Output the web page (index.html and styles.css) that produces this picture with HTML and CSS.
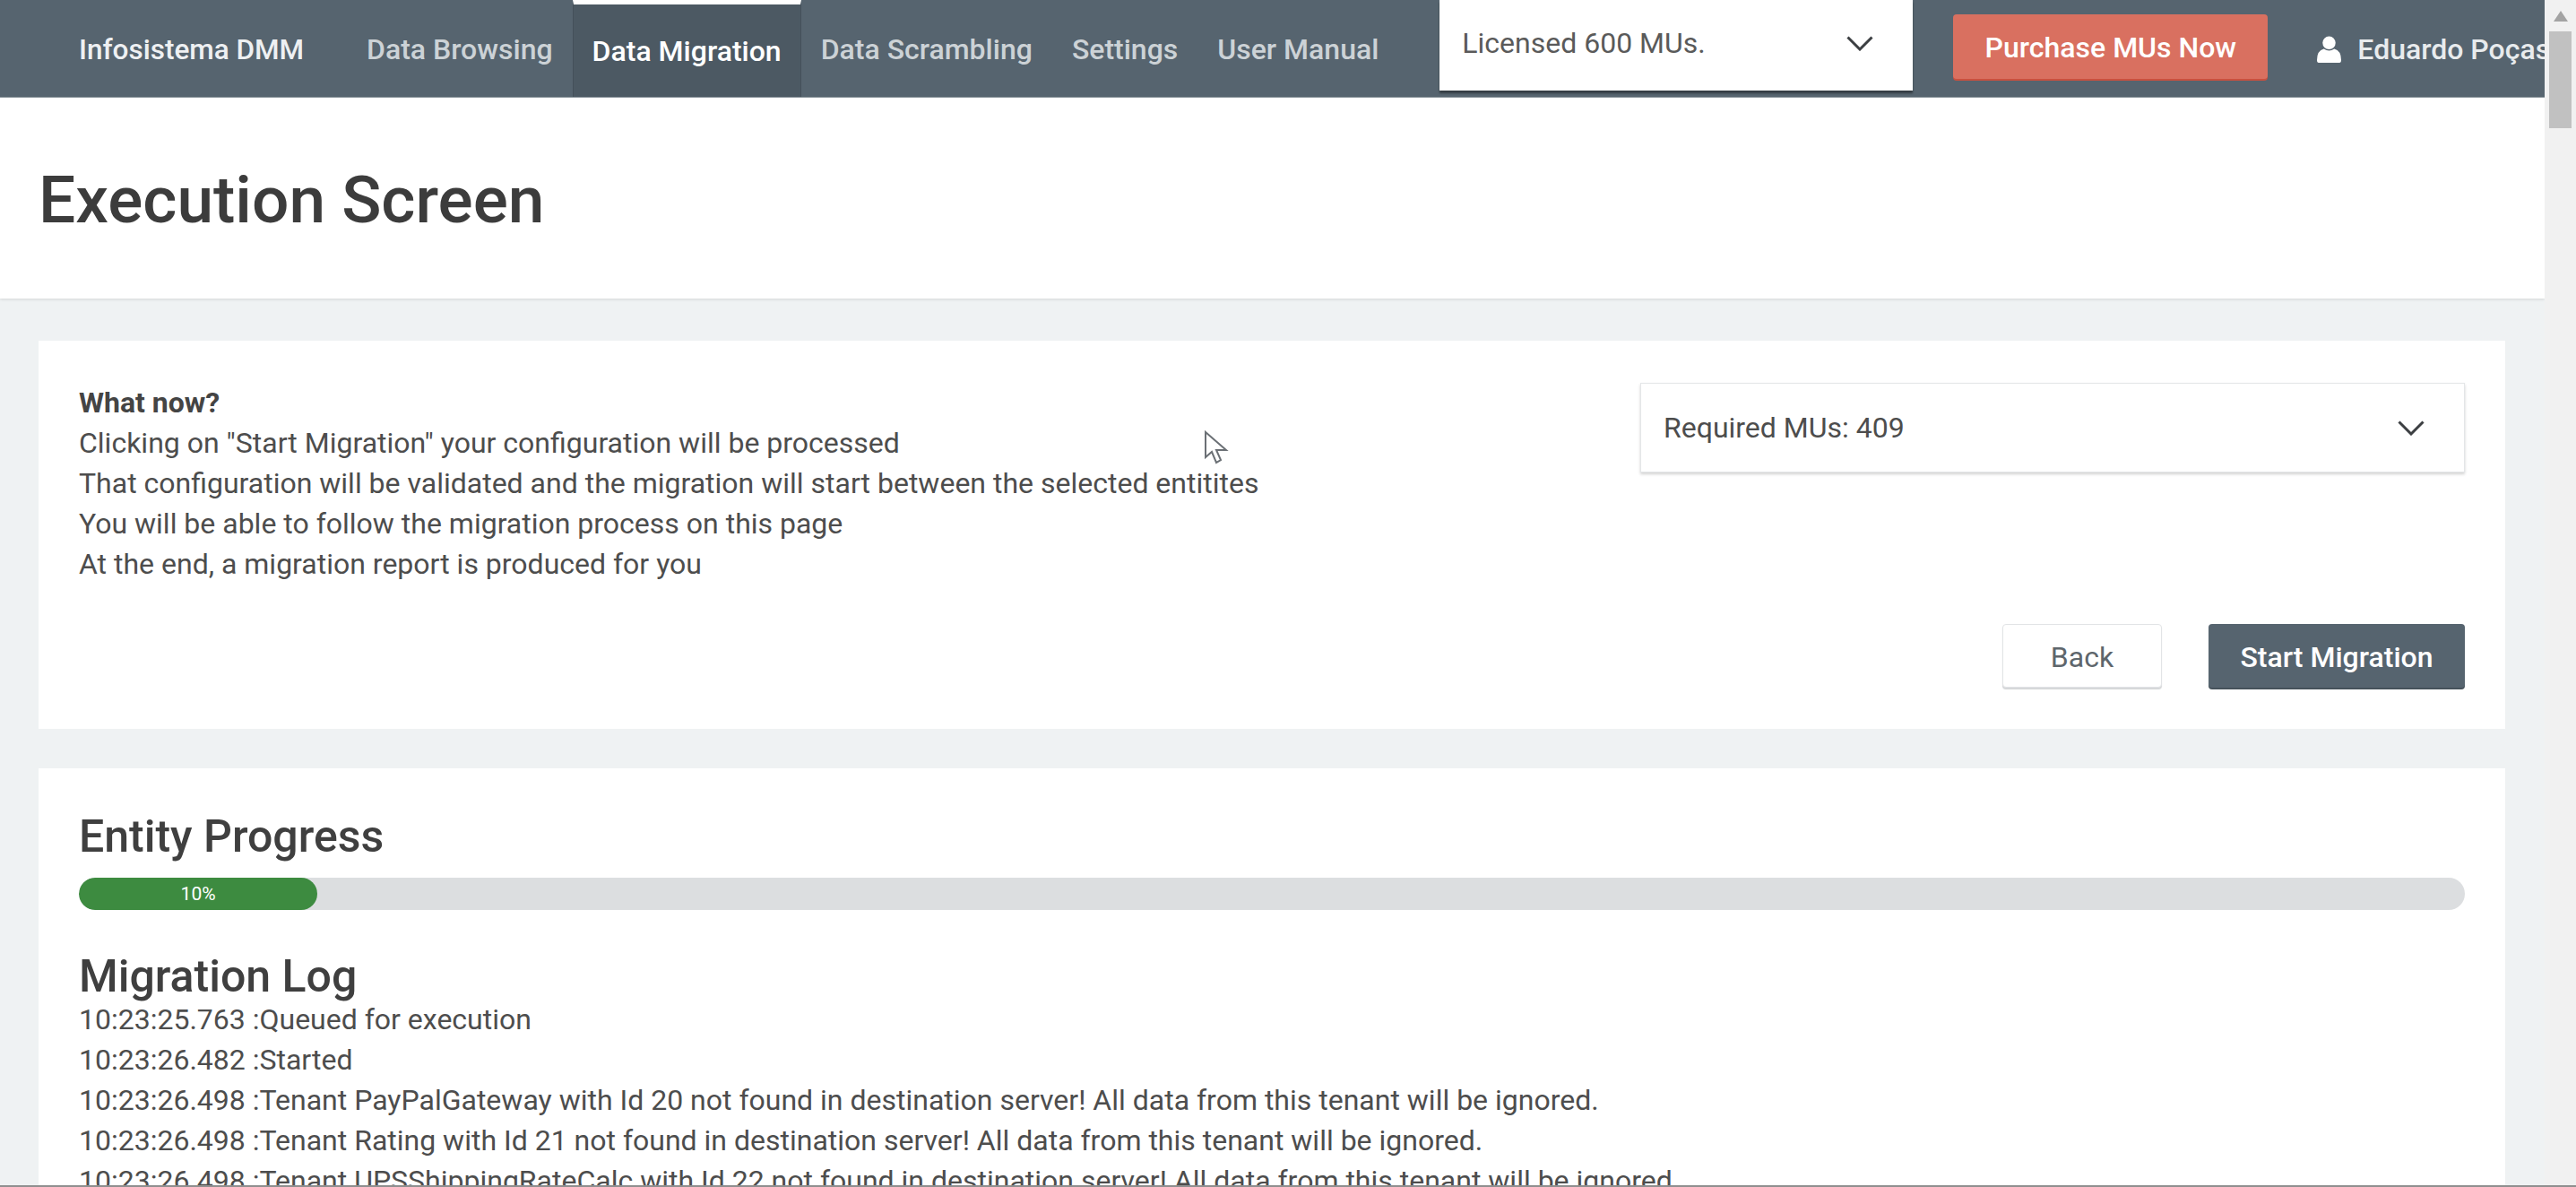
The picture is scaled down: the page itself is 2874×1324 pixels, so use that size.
FILE: index.html
```html
<!DOCTYPE html>
<html lang="en">
<head>
<meta charset="utf-8">
<title>Execution Screen</title>
<link rel="stylesheet" href="styles.css">
</head>
<body>
<div class="app">
  <div class="main">
    <header class="topbar">
      <div class="brand">Infosistema DMM</div>
      <nav class="nav">
        <a class="tab">Data Browsing</a>
        <a class="tab tab-active">Data Migration</a>
        <a class="tab">Data Scrambling</a>
        <a class="tab">Settings</a>
        <a class="tab">User Manual</a>
      </nav>
      <div class="license">
        <span>Licensed 600 MUs.</span>
        <svg class="chevron" viewBox="0 0 30 17"><path d="M1.5 1.5 L15 15 L28.5 1.5"/></svg>
      </div>
      <button class="purchase">Purchase MUs Now</button>
      <div class="user">
        <svg class="user-icon" viewBox="0 0 28 32"><circle cx="14" cy="8" r="7.5"/><path d="M2 31 Q0 31 0 28 Q0 17 8 15 Q14 19 20 15 Q28 17 28 28 Q28 31 26 31 Z"/></svg>
        <span>Eduardo Poças</span>
      </div>
    </header>
    <section class="title-panel">
      <h1 class="page-title">Execution Screen</h1>
    </section>
    <div class="content">
      <section class="card card-info">
        <div class="info-row">
          <div class="info-text">
            <strong class="info-head">What now?</strong>
            <div>Clicking on "Start Migration" your configuration will be processed</div>
            <div>That configuration will be validated and the migration will start between the selected entitites</div>
            <div>You will be able to follow the migration process on this page</div>
            <div>At the end, a migration report is produced for you</div>
          </div>
          <div class="required">
            <span>Required MUs: 409</span>
            <svg class="chevron" viewBox="0 0 30 17"><path d="M1.5 1.5 L15 15 L28.5 1.5"/></svg>
          </div>
        </div>
        <div class="actions">
          <button class="btn btn-back">Back</button>
          <button class="btn btn-start">Start Migration</button>
        </div>
      </section>
      <section class="card card-progress">
        <h2 class="section-title">Entity Progress</h2>
        <div class="track"><div class="fill" style="width:10%">10%</div></div>
        <h2 class="section-title log-title">Migration Log</h2>
        <div class="log">
          <div>10:23:25.763 :Queued for execution</div>
          <div>10:23:26.482 :Started</div>
          <div>10:23:26.498 :Tenant PayPalGateway with Id 20 not found in destination server! All data from this tenant will be ignored.</div>
          <div>10:23:26.498 :Tenant Rating with Id 21 not found in destination server! All data from this tenant will be ignored.</div>
          <div>10:23:26.498 :Tenant UPSShippingRateCalc with Id 22 not found in destination server! All data from this tenant will be ignored.</div>
        </div>
      </section>
    </div>
    <svg class="cursor" viewBox="0 0 28 40"><path d="M2 2 L2 30 L9 24 L14 36 L19 33 L14 22 L25 22 Z"/></svg>
  </div>
  <aside class="scrollbar">
    <svg class="scroll-arrow" viewBox="0 0 16 12"><path d="M8 0 L16 12 L0 12 Z"/></svg>
    <div class="scroll-thumb"></div>
  </aside>
  <div class="edge"></div>
</div>
</body>
</html>
```

FILE: styles.css
```css
* { box-sizing: border-box; }
html, body { margin: 0; height: 100%; overflow: hidden; }
body {
  font-family: Roboto, "Liberation Sans", sans-serif;
  font-size: 32px;
  line-height: 45px;
  color: #4d4d4d;
  background: #eff2f3;
}
.app { display: flex; height: 1324px; position: relative; overflow: hidden; }
.main { width: 2839px; flex: none; position: relative; display: flex; flex-direction: column; height: 1322px; overflow: hidden; }

.topbar {
  flex: none;
  height: 109px;
  background: #56646f;
  display: flex;
  align-items: center;
  white-space: nowrap;
  overflow: hidden;
  color: #fff;
  border-bottom: 1px solid #8d979f;
}
.brand { margin-left: 88px; padding-top: 2px; font-size: 31.5px; font-weight: 500; color: #eef0f2; width: 299px; flex: none; }
.nav { display: flex; height: 100%; flex: none; }
.tab { display: flex; align-items: center; padding: 2px 22px 0; color: #ccd2d6; font-weight: 500; }
.tab-active {
  background: #4c5963;
  color: #fff;
  border-top: 5px solid #fff;
  border-left: 1px solid #44505a;
  border-right: 1px solid #44505a;
  padding: 2px 21px 0;
}
.license {
  flex: none;
  margin-left: 46px;
  width: 528px;
  height: 101px;
  align-self: flex-start;
  background: #fff;
  box-shadow: 0 3px 2px rgba(0,0,0,.4);
  color: #5a5a5a;
  display: flex;
  align-items: center;
  justify-content: space-between;
  padding: 0 44px 4px 25px;
}
.chevron { width: 30px; height: 17px; fill: none; stroke: #3c3f42; stroke-width: 3; }
.purchase {
  flex: none;
  margin-left: 45px;
  width: 351px;
  height: 72px;
  margin-bottom: 5px;
  border: 0;
  border-radius: 4px;
  background: #d97060;
  box-shadow: 0 2px 0 #c9503f;
  color: #fff;
  font: 500 32px/45px Roboto, sans-serif;
  padding: 4px 0 0;
}
.user { flex: none; margin-left: 55px; padding-top: 2px; display: flex; align-items: center; gap: 18px; font-weight: 500; color: #e8ebed; }
.user-icon { width: 27px; height: 31px; fill: #fff; }

.title-panel {
  flex: none;
  height: 224px;
  background: #fff;
  padding: 4px 0 0 43px;
  display: flex;
  align-items: center;
  box-shadow: 0 1px 3px rgba(0,0,0,.12);
  position: relative;
}
.page-title { margin: 0; font-size: 73px; line-height: 80px; font-weight: 500; color: #3c3c3c; }

.content { flex: 1; min-height: 0; padding: 47px 44px 0 43px; display: flex; flex-direction: column; gap: 44px; }
.card { background: #fff; padding: 47px 45px 46px; flex: none; }
.card-info { height: 433px; }
.card-progress { padding-top: 46px; }

.info-row { display: flex; justify-content: space-between; align-items: flex-start; }
.info-head { display: block; font-weight: 700; color: #444; }
.required {
  width: 920px;
  height: 100px;
  border: 1px solid #e4e6e8;
  box-shadow: 0 2px 3px rgba(0,0,0,.18);
  display: flex;
  align-items: center;
  justify-content: space-between;
  padding: 0 44px 0 25px;
  background: #fff;
}
.actions { display: flex; justify-content: flex-end; gap: 52px; margin-top: 44px; }
.btn { height: 71px; border-radius: 4px; font: 400 32px/45px Roboto, sans-serif; padding: 4px 0 0; }
.btn-back { width: 178px; background: #fff; color: #5e666c; border: 1px solid #e2e4e6; box-shadow: 0 2px 1px #d4d6d8; }
.btn-start { width: 286px; background: #56646f; color: #fff; font-weight: 500; border: 0; box-shadow: 0 2px 0 #46525b; }

.section-title { margin: 0; font-size: 50px; line-height: 60px; font-weight: 500; color: #3f3f3f; }
.track { margin-top: 16px; height: 36px; border-radius: 18px; background: #dcdee0; overflow: hidden; }
.fill { height: 100%; border-radius: 18px; background: #3d8b40; color: #fff; font-size: 21px; line-height: 36px; text-align: center; }
.log-title { margin-top: 44px; }
.log { margin-top: -4px; white-space: nowrap; }

.cursor { position: absolute; left: 1343px; top: 480px; width: 28px; height: 40px; fill: #fff; stroke: #6b7075; stroke-width: 2; }

.scrollbar { flex: 1; background: #f1f1f1; padding: 12px 5px 0; display: flex; flex-direction: column; align-items: center; }
.scroll-arrow { width: 16px; height: 12px; fill: #a3a3a3; flex: none; }
.scroll-thumb { margin-top: 11px; width: 100%; height: 108px; background: #c1c1c1; flex: none; }
.edge { position: absolute; left: 0; right: 0; bottom: 0; height: 2px; background: #8f8f8f; }
```
